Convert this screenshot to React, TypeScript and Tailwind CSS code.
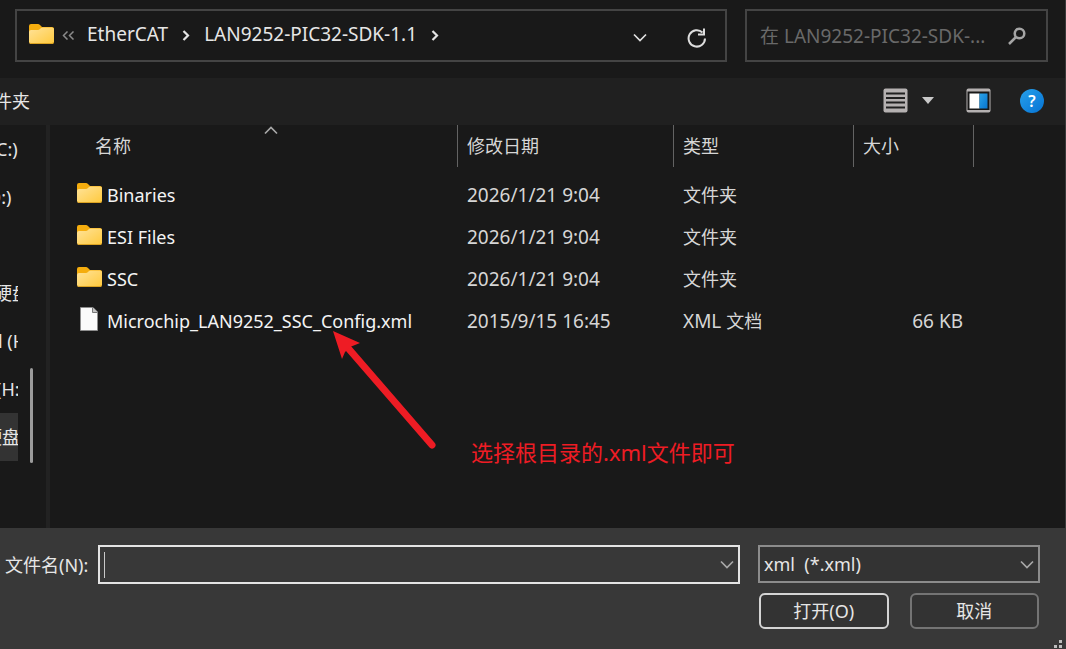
import React, { useState } from 'react';

interface FileEntry {
  name: string;
  modified: string;
  type: React.ReactNode;
  size: string;
  isFolder: boolean;
}

interface DriveEntry {
  label: string;
  offset: string;
  active?: boolean;
}

const folderType = <span className="text-lg">文件夹</span>;

const files: FileEntry[] = [
  { name: 'Binaries', modified: '2026/1/21 9:04', type: folderType, size: '', isFolder: true },
  { name: 'ESI Files', modified: '2026/1/21 9:04', type: folderType, size: '', isFolder: true },
  { name: 'SSC', modified: '2026/1/21 9:04', type: folderType, size: '', isFolder: true },
  {
    name: 'Microchip_LAN9252_SSC_Config.xml',
    modified: '2015/9/15 16:45',
    type: <>XML <span className="text-lg">文档</span></>,
    size: '66 KB',
    isFolder: false,
  },
];

// The navigation pane is scrolled sideways, so only part of each label is visible
const drives: DriveEntry[] = [
  { label: 'C:)', offset: '-ml-1' },
  { label: 'D:)', offset: '-ml-3' },
  { label: '', offset: '' },
  { label: '硬盘', offset: '-ml-1.5' },
  { label: 'l (H', offset: '-ml-0.5' },
  { label: '(H:', offset: '-ml-1' },
  { label: '硬盘', offset: '-ml-4', active: true },
];

function FolderIcon() {
  return (
    <svg width="25" height="20" viewBox="0 0 25 20" className="mb-1 shrink-0" aria-hidden="true">
      <defs>
        <linearGradient id="folder" x1="0" y1="0" x2="1" y2="1">
          <stop offset="0" stopColor="#ffe39a" />
          <stop offset="1" stopColor="#ffc93c" />
        </linearGradient>
      </defs>
      <path d="M0 2Q0 0 2 0H9Q10 0 11 1L13 3H23Q25 3 25 5V17H0Z" fill="#f5ad0e" />
      <path d="M0 8Q0 6 2 6H9Q10 6 11 5L12 4Q12.500 3.500 13.500 3.500H23Q25 3.500 25 5V18Q25 20 23 20H2Q0 20 0 18Z" fill="url(#folder)" />
      <path d="M0.500 18.500Q1 19.500 2 19.500H23Q24.500 19.500 24.500 18" fill="none" stroke="#dca322" />
    </svg>
  );
}

function FileIcon() {
  return (
    <svg width="25" height="24" viewBox="0 0 25 24" className="mb-1 shrink-0" aria-hidden="true">
      <path d="M3.500 0.500H16L20.500 5V23.500H3.500Z" fill="#fafafa" stroke="#8d8d8d" />
      <path d="M15.500 0.500V5.500H20.500" fill="#c4c4c4" stroke="#777" />
    </svg>
  );
}

function Chevron({ className }: { className: string }) {
  return (
    <svg width="14" height="9" viewBox="0 0 14 9" fill="none" stroke="currentColor" strokeWidth="1.700" className={className} aria-hidden="true">
      <path d="M1 1.500L7 7.500L13 1.500" />
    </svg>
  );
}

function CrumbArrow() {
  return (
    <svg width="8" height="11" viewBox="0 0 8 11" fill="none" stroke="#e4e4e4" strokeWidth="2.200" className="shrink-0" aria-hidden="true">
      <path d="M1.500 1L6 5.500L1.500 10" />
    </svg>
  );
}

export default function App() {
  const [fileName, setFileName] = useState('');
  const [query, setQuery] = useState('');

  return (
    <div className="flex min-h-screen flex-col overflow-hidden border-r border-[#3a3a3a] bg-[#191919] font-['Noto_Sans','Noto_Sans_CJK_SC',sans-serif] text-[19px] leading-6 text-[#e6e6e6]">
      {/* Address bar and search */}
      <header className="flex h-[78px] gap-[18px] pt-[9px] pr-[17px] pl-[15px]">
        <nav className="flex h-[53px] min-w-0 flex-1 items-center border-2 border-[#444444] pr-[18px] pl-3">
          <FolderIcon />
          <svg width="13" height="9" viewBox="0 0 13 9" fill="none" stroke="#8a8a8a" strokeWidth="1.500" className="ml-2 shrink-0" aria-hidden="true">
            <path d="M5.500 0.500L1.500 4.500L5.500 8.500M11.500 0.500L7.500 4.500L11.500 8.500" />
          </svg>
          <a href="#ethercat" className="mr-3.5 ml-3 pb-1">EtherCAT</a>
          <CrumbArrow />
          <a href="#sdk" className="mx-3.5 pb-1 whitespace-nowrap">LAN9252-PIC32-SDK-1.1</a>
          <CrumbArrow />
          <button type="button" aria-label="展开" className="ml-auto pt-1">
            <Chevron className="text-[#e0e0e0]" />
          </button>
          <button type="button" aria-label="刷新" className="ml-10 pt-1">
            <svg width="20" height="20" viewBox="0 0 20 20" fill="none" stroke="#dedede" strokeWidth="2" aria-hidden="true">
              <path d="M18 10.500A8.200 8.200 0 1 1 15.500 4.500" />
              <path d="M17 0.500V6.500H11" />
            </svg>
          </button>
        </nav>
        <div className="flex h-[53px] w-[303px] items-center border-2 border-[#444444] pr-5 pl-[13px]">
          <input
            type="text"
            aria-label="搜索"
            value={query}
            onChange={(e) => setQuery(e.target.value)}
            placeholder="在 LAN9252-PIC32-SDK-..."
            className="min-w-0 flex-1 bg-transparent outline-none placeholder:text-[#696969]"
          />
          <svg width="18" height="18" viewBox="0 0 18 18" fill="none" stroke="#a5a5a5" strokeWidth="2.500" className="shrink-0" aria-hidden="true">
            <circle cx="11.500" cy="6.500" r="4.800" />
            <path d="M8 10L1 17" />
          </svg>
        </div>
      </header>

      {/* Toolbar */}
      <div className="flex h-[47px] items-center justify-between bg-[#202020] pr-[21px] pb-0.5">
        <button type="button" className="-ml-6 text-lg">文件夹</button>
        <div className="flex items-center">
          <button type="button" aria-label="视图">
            <svg width="25" height="25" viewBox="0 0 25 25" aria-hidden="true">
              <rect x="0.500" y="0.500" width="24" height="24" rx="2" fill="#b5b1b1" />
              <path d="M3 5.500H22M3 10H22M3 14.500H22M3 19.500H22" stroke="#202020" strokeWidth="2" />
            </svg>
          </button>
          <button type="button" aria-label="更多选项" className="ml-3.5">
            <svg width="12" height="7" viewBox="0 0 12 7" aria-hidden="true">
              <path d="M0 0H12L6 7Z" fill="#c9c9c9" />
            </svg>
          </button>
          <button type="button" aria-label="预览窗格" className="ml-8">
            <svg width="25" height="25" viewBox="0 0 25 25" aria-hidden="true">
              <defs>
                <linearGradient id="pane" x1="0" y1="0" x2="1" y2="1">
                  <stop offset="0" stopColor="#2ba3e8" />
                  <stop offset="1" stopColor="#0674cf" />
                </linearGradient>
              </defs>
              <rect x="0.500" y="0.500" width="24" height="24" rx="2" fill="#b5b1b1" />
              <rect x="1.500" y="3.500" width="22" height="18.500" fill="#181818" />
              <rect x="3.500" y="5.500" width="10" height="15" fill="#fff" />
              <rect x="13.500" y="5.500" width="8" height="15" fill="url(#pane)" />
            </svg>
          </button>
          <button type="button" aria-label="帮助" className="ml-[29px] flex size-6 items-center justify-center rounded-full bg-linear-to-br from-[#27a0ea] to-[#0573d4] text-base font-semibold text-white">
            ?
          </button>
        </div>
      </div>

      <div className="flex min-h-[403px] flex-1">
        {/* Navigation pane */}
        <aside className="flex w-[50px] shrink-0 border-r-4 border-[#222222]">
          <ul className="w-[18px] overflow-hidden">
            {drives.map((drive, index) => (
              <li key={index} className={`flex h-12 items-center overflow-hidden whitespace-nowrap ${drive.active ? 'bg-[#333333]' : ''}`}>
                <span className={`text-lg ${drive.offset}`}>{drive.label}</span>
              </li>
            ))}
          </ul>
          <div className="mt-[243px] ml-3 h-[95px] w-[3px] rounded-full bg-[#9b9b9b]" />
        </aside>

        {/* File list */}
        <main className="relative min-w-0 flex-1">
          <table className="w-full table-fixed">
            <colgroup>
              <col className="w-[408px]" />
              <col className="w-[216px]" />
              <col className="w-[180px]" />
              <col className="w-[120px]" />
              <col />
            </colgroup>
            <thead>
              <tr className="text-left text-lg text-[#d6d6d6]">
                <th className="p-0 pb-[7px] font-normal">
                  <div className="flex h-[42px] items-center border-r border-[#636363] pl-[45px]">名称</div>
                </th>
                <th className="p-0 pb-[7px] font-normal">
                  <div className="flex h-[42px] items-center border-r border-[#636363] pl-[9px]">修改日期</div>
                </th>
                <th className="p-0 pb-[7px] font-normal">
                  <div className="flex h-[42px] items-center border-r border-[#636363] pl-[9px]">类型</div>
                </th>
                <th className="p-0 pb-[7px] font-normal">
                  <div className="flex h-[42px] items-center border-r border-[#636363] pl-[9px]">大小</div>
                </th>
                <th className="p-0" />
              </tr>
            </thead>
            <tbody>
              {files.map((file) => (
                <tr key={file.name} className="h-[42px] text-[#d6d6d6]">
                  <td className="p-0 pl-[27px] text-[#f4f4f4]">
                    <div className="flex items-center gap-[5px] text-lg leading-6 whitespace-nowrap">
                      {file.isFolder ? <FolderIcon /> : <FileIcon />}
                      {file.name}
                    </div>
                  </td>
                  <td className="p-0 pl-[9px]">{file.modified}</td>
                  <td className="p-0 pl-[9px]">{file.type}</td>
                  <td className="p-0 pr-[11px] text-right">{file.size}</td>
                  <td className="p-0" />
                </tr>
              ))}
            </tbody>
          </table>

          {/* Sort indicator over the name column */}
          <Chevron className="absolute top-px left-[214px] rotate-180 text-[#a8a8a8]" />

          {/* Red note pointing at the xml file */}
          <svg width="110" height="122" viewBox="0 0 110 122" className="absolute top-[204px] left-[280px]" aria-hidden="true">
            <path d="M18 19L102 116" stroke="#ee1c24" strokeWidth="7" strokeLinecap="round" />
            <path d="M3 2L30 14L20 18L15 23L12 30Z" fill="#ee1c24" />
          </svg>
          <p className="absolute top-[313px] left-[421px] text-[22px] leading-7 whitespace-nowrap text-[#ee1c24]">
            选择根目录的.xml文件即可
          </p>
        </main>
      </div>

      {/* File name, filter and actions */}
      <footer className="relative flex h-[121px] gap-[18px] bg-[#383838] pt-[17px] pr-[25px] pl-[5px]">
        <div className="flex h-[39px] min-w-0 flex-1 items-center gap-2.5">
          <label htmlFor="file-name" className="shrink-0 text-lg">文件名(N):</label>
          <div className="flex h-full min-w-0 flex-1 items-center border-2 border-[#e4e4e4] bg-[#383838] pr-1 pl-1">
            <span className="h-[26px] w-px bg-[#c8c8c8]" />
            <input
              id="file-name"
              type="text"
              value={fileName}
              onChange={(e) => setFileName(e.target.value)}
              className="min-w-0 flex-1 bg-transparent px-1 outline-none"
            />
            <button type="button" aria-label="历史记录">
              <Chevron className="text-[#a8a8a8]" />
            </button>
          </div>
        </div>
        <div className="w-[282px] shrink-0">
          <div className="relative">
            <select aria-label="文件类型" className="h-[38px] w-full appearance-none border-2 border-[#8c8c8c] bg-[#333333] pl-1 text-lg whitespace-pre outline-none">
              <option>{'xml\u00a0 (*.xml)'}</option>
            </select>
            <Chevron className="pointer-events-none absolute top-[15px] right-1.5 text-[#a8a8a8]" />
          </div>
          <div className="mt-2.5 grid h-9 grid-cols-2 gap-[21px] px-px text-lg leading-6">
            <button type="button" className="rounded-md border-2 border-[#d4d4d4] bg-[#333333]">打开(O)</button>
            <button type="button" className="rounded-md border-2 border-[#747474] bg-[#333333]">取消</button>
          </div>
        </div>
        <svg width="10" height="10" viewBox="0 0 10 10" fill="#bdbdbd" className="absolute right-0.5 bottom-0" aria-hidden="true">
          <path d="M6 1h3v3h-3zM6 6h3v3h-3zM1 6h3v3h-3z" />
        </svg>
      </footer>
    </div>
  );
}
